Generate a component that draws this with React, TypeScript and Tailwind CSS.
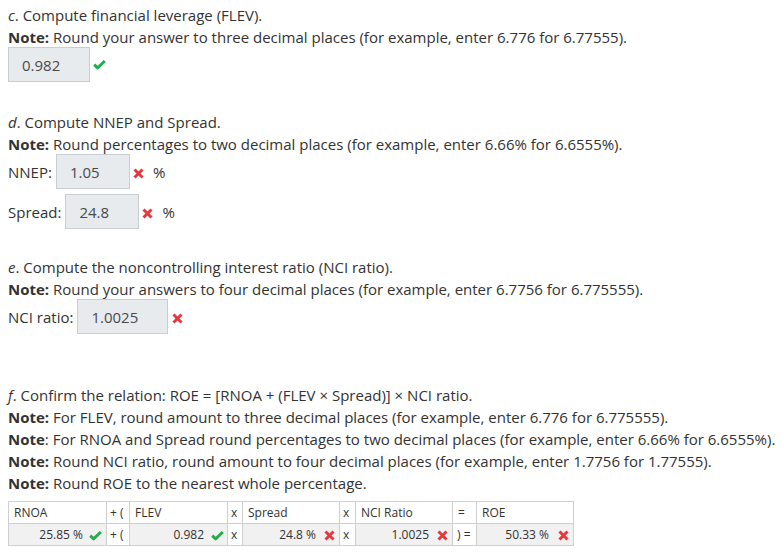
import React from "react";

const Check = () => (
  <svg width="13" height="11" viewBox="0 0 13 11" className="inline-block">
    <path d="M1.2 5.6 L4.6 8.8 L11.8 2" fill="none" stroke="#21b04b" strokeWidth="3" strokeLinejoin="round" />
  </svg>
);

const Cross = () => (
  <svg width="11" height="11" viewBox="0 0 11 11" className="inline-block">
    <path d="M1.5 1.5 L9.5 9.5 M9.5 1.5 L1.5 9.5" fill="none" stroke="#e5373e" strokeWidth="3" />
  </svg>
);

const Box = ({ value, w }: { value: string; w: string }) => (
  <div className={`${w} h-[35px] bg-[#e8ebee] border border-[#c9ced3] flex items-center pl-[13px] text-[#4a4a4a]`}>
    {value}
  </div>
);

const Note = ({ children, colon = true }: { children: React.ReactNode; colon?: boolean }) => (
  <p>
    <b className="font-bold">Note{colon ? ":" : ""}</b>
    {colon ? " " : ": "}
    {children}
  </p>
);

const App = () => {
  return (
    <div
      className="bg-white text-[#333] text-[15px] leading-[22px] pl-2 pt-1 w-[781px] h-[555px] overflow-hidden"
      style={{ fontFamily: '"Open Sans", sans-serif' }}
    >
      {/* c */}
      <p>
        <i>c</i>. Compute financial leverage (FLEV).
      </p>
      <Note>Round your answer to three decimal places (for example, enter 6.776 for 6.77555).</Note>
      <div className="flex items-center gap-[3px] -mt-[1px]">
        <Box value="0.982" w="w-[82px]" />
        <Check />
      </div>

      {/* d */}
      <div className="mt-[29px]">
        <p>
          <i>d</i>. Compute NNEP and Spread.
        </p>
        <Note>Round percentages to two decimal places (for example, enter 6.66% for 6.6555%).</Note>
        <div className="flex items-center -mt-[1px]">
          <span className="mr-[4px]">NNEP:</span>
          <Box value="1.05" w="w-[74px]" />
          <span className="ml-[3px]"><Cross /></span>
          <span className="ml-[9px]">%</span>
        </div>
        <div className="flex items-center mt-[5px]">
          <span className="mr-[4px]">Spread:</span>
          <Box value="24.8" w="w-[74px]" />
          <span className="ml-[3px]"><Cross /></span>
          <span className="ml-[9px]">%</span>
        </div>
      </div>

      {/* e */}
      <div className="mt-[27px]">
        <p>
          <i>e</i>. Compute the noncontrolling interest ratio (NCI ratio).
        </p>
        <Note>Round your answers to four decimal places (for example, enter 6.7756 for 6.775555).</Note>
        <div className="flex items-center -mt-[1px]">
          <span className="mr-[4px]">NCI ratio:</span>
          <Box value="1.0025" w="w-[91px]" />
          <span className="ml-[4px]"><Cross /></span>
        </div>
      </div>

      {/* f */}
      <div className="mt-[50px]">
        <p>
          <i>f</i>. Confirm the relation: ROE = [RNOA + (FLEV × Spread)] × NCI ratio.
        </p>
        <Note>For FLEV, round amount to three decimal places (for example, enter 6.776 for 6.775555).</Note>
        <Note colon={false}>For RNOA and Spread round percentages to two decimal places (for example, enter 6.66% for 6.6555%).</Note>
        <Note>Round NCI ratio, round amount to four decimal places (for example, enter 1.7756 for 1.77555).</Note>
        <Note>Round ROE to the nearest whole percentage.</Note>

        <table className="mt-[7px] border-collapse text-[12px] leading-[20px] text-[#333]">
          <thead>
            <tr className="h-[22px]">
              <td className="w-[98px] border border-[#cfcfcf] px-[5px]">RNOA</td>
              <td className="w-[23px] border border-[#cfcfcf] px-[3px]">+ (</td>
              <td className="w-[98px] border border-[#cfcfcf] px-[5px]">FLEV</td>
              <td className="w-[15px] border border-[#cfcfcf] px-[3px]">x</td>
              <td className="w-[97px] border border-[#cfcfcf] px-[5px]">Spread</td>
              <td className="w-[16px] border border-[#cfcfcf] px-[3px]">x</td>
              <td className="w-[97px] border border-[#cfcfcf] px-[5px]">NCI Ratio</td>
              <td className="w-[24px] border border-[#cfcfcf] px-[5px]">=</td>
              <td className="w-[97px] border border-[#cfcfcf] px-[5px]">ROE</td>
            </tr>
          </thead>
          <tbody>
            <tr className="h-[22px]">
              <td className="border border-[#cfcfcf] bg-[#f1f1f1] pr-[4px] text-right whitespace-nowrap">
                25.85 %<span className="ml-[6px]"><Check /></span>
              </td>
              <td className="border border-[#cfcfcf] px-[3px] whitespace-nowrap">+ (</td>
              <td className="border border-[#cfcfcf] bg-[#f1f1f1] pr-[3px] text-right whitespace-nowrap">
                0.982<span className="ml-[7px]"><Check /></span>
              </td>
              <td className="border border-[#cfcfcf] px-[3px]">x</td>
              <td className="border border-[#cfcfcf] bg-[#f1f1f1] pr-[4px] text-right whitespace-nowrap">
                24.8 %<span className="ml-[8px]"><Cross /></span>
              </td>
              <td className="border border-[#cfcfcf] px-[3px]">x</td>
              <td className="border border-[#cfcfcf] bg-[#f1f1f1] pr-[4px] text-right whitespace-nowrap">
                1.0025<span className="ml-[8px]"><Cross /></span>
              </td>
              <td className="border border-[#cfcfcf] px-[4px] whitespace-nowrap">) =</td>
              <td className="border border-[#cfcfcf] bg-[#f1f1f1] pr-[4px] text-right whitespace-nowrap">
                50.33 %<span className="ml-[9px]"><Cross /></span>
              </td>
            </tr>
          </tbody>
        </table>
      </div>
    </div>
  );
};

export default App;
